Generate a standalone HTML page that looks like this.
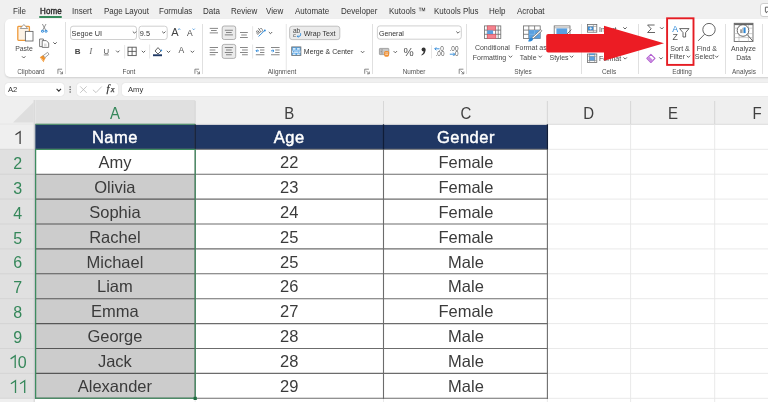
<!DOCTYPE html>
<html><head><meta charset="utf-8">
<style>
*{margin:0;padding:0;box-sizing:border-box}
html,body{width:768px;height:402px;overflow:hidden;background:#f0f0f0;font-family:"Liberation Sans",sans-serif;position:relative}
.a{position:absolute}
.t,.tab,.glab,svg{will-change:transform}
.t{position:absolute;white-space:nowrap;color:#404040}
.tab{position:absolute;top:7.1px;font-size:8px;color:#333;transform:scaleY(1.13);transform-origin:0 7.3px;white-space:nowrap}
#ribbon{position:absolute;left:5px;top:19px;width:775px;height:58px;background:#fff;border-radius:5px;box-shadow:0 1px 2px rgba(0,0,0,.14)}
.sep{position:absolute;top:24px;width:1px;height:50px;background:#e0e0e0}
.glab{position:absolute;top:67.5px;font-size:6.4px;color:#505050;white-space:nowrap;transform:translateX(-50%)}
.rl{position:absolute;font-size:7.3px;color:#404040;white-space:nowrap}
.dl{position:absolute;width:5px;height:5px}
.chev{position:absolute;width:5px;height:3px}
/* grid */
.ch{position:absolute;top:100px;height:24.4px;background:#efefef;color:#404040;font-size:15px;text-align:center;line-height:25px}
.rh{position:absolute;left:0;width:35px;background:#efefef;font-size:15.5px;text-align:center;color:#404040}
.cell{position:absolute;font-size:16px;text-align:center;color:#3d3d3d}
</style></head><body>

<!-- tabs -->
<div class="tab" style="left:12.5px">File</div>
<div class="tab" style="left:39.5px;color:#262626;-webkit-text-stroke:0.35px #262626;letter-spacing:0.1px">Home</div>
<div class="a" style="left:39px;top:16px;width:23px;height:2px;background:#358a5a;border-radius:1px"></div>
<div class="tab" style="left:72px">Insert</div>
<div class="tab" style="left:103.5px">Page Layout</div>
<div class="tab" style="left:159px">Formulas</div>
<div class="tab" style="left:202.5px">Data</div>
<div class="tab" style="left:230.5px">Review</div>
<div class="tab" style="left:266.3px">View</div>
<div class="tab" style="left:294.7px">Automate</div>
<div class="tab" style="left:341.3px">Developer</div>
<div class="tab" style="left:388.6px">Kutools ™</div>
<div class="tab" style="left:434px">Kutools Plus</div>
<div class="tab" style="left:489px">Help</div>
<div class="tab" style="left:516.5px">Acrobat</div>
<div class="a" style="left:760px;top:3.3px;width:20px;height:14px;background:#fff;border:1px solid #cfcfcf;border-radius:3px"></div>
<svg class="a" style="left:760px;top:0" width="8" height="20"><path d="M5.4,7.2 H9 M5.4,7.2 V11.6 H6.2 V12.9 L7.6,11.6 H9" fill="none" stroke="#555" stroke-width="0.9"/></svg>

<div id="ribbon"></div>

<!-- separators -->
<div class="sep" style="left:64.5px;top:22px;height:52px"></div>
<div class="sep" style="left:201.7px"></div>
<div class="sep" style="left:372px"></div>
<div class="sep" style="left:466px"></div>
<div class="sep" style="left:580.5px"></div>
<div class="sep" style="left:638px"></div>
<div class="sep" style="left:725px"></div>
<div class="sep" style="left:762px"></div>

<!-- group labels -->
<div class="glab" style="left:31px">Clipboard</div>
<div class="glab" style="left:128.75px">Font</div>
<div class="glab" style="left:282.4px">Alignment</div>
<div class="glab" style="left:414px">Number</div>
<div class="glab" style="left:522.5px">Styles</div>
<div class="glab" style="left:608.75px">Cells</div>
<div class="glab" style="left:682px">Editing</div>
<div class="glab" style="left:743.6px">Analysis</div>

<svg class="a" style="left:0;top:0" width="768" height="80" viewBox="0 0 768 80" font-family="Liberation Sans, sans-serif">
<defs>
<path id="chev" d="M-1.7,-0.9 L0,0.8 L1.7,-0.9" fill="none" stroke="#505050" stroke-width="0.9"/>
</defs>
<g fill="#484848" font-size="7.0">
<!-- Clipboard -->
<g>
  <rect x="17.8" y="26.4" width="11.6" height="14" rx="0.8" fill="#fdf3e6" stroke="#ef9a3a" stroke-width="1.3"/>
  <path d="M20.2,28.5 L22.6,25.7 Q23.9,23.6 25.2,25.7 L27.6,28.5 Z" fill="#fff" stroke="#858585" stroke-width="0.8" stroke-linejoin="round"/>
  <rect x="25.4" y="31.4" width="7.6" height="9.6" fill="#fff" stroke="#6a6a6a" stroke-width="0.9"/>
  <text x="24" y="50.8" text-anchor="middle" font-size="6.9">Paste</text>
  <use href="#chev" x="23.7" y="57.2"/>
  <!-- scissors -->
  <path d="M42.4,24 L45.6,30 M46,24 L42.8,30" stroke="#707070" stroke-width="0.75" fill="none"/>
  <circle cx="42.5" cy="31.2" r="1.45" fill="#3b8fd9"/>
  <circle cx="46" cy="31.2" r="1.45" fill="#3b8fd9"/>
  <circle cx="42.5" cy="31.2" r="0.5" fill="#fff"/>
  <circle cx="46" cy="31.2" r="0.5" fill="#fff"/>
  <!-- copy -->
  <path d="M39.6,39 H43.4 V46.6 H39.6 Z" fill="#fff" stroke="#666" stroke-width="0.85"/>
  <path d="M42.2,40.6 H46.3 L48.7,43 V47.4 H42.2 Z" fill="#fff" stroke="#666" stroke-width="0.85"/>
  <path d="M44,44.2 H46.6 M44,45.8 H46.6" stroke="#999" stroke-width="0.5"/>
  <use href="#chev" x="55" y="43.2"/>
  <!-- format painter -->
  <path d="M39.8,57.2 L43.4,55 L45.2,58.2 L43.6,62.2 Q41.5,59.6 39.8,57.2 Z" fill="#f0922b"/>
  <path d="M43.2,55.6 L47.6,52.4 L49,54.2 L45,57.6 Z" fill="#fff" stroke="#777" stroke-width="0.7"/>
  <path d="M40.6,58 L43.6,60.8" stroke="#fff" stroke-width="0.5"/>
</g>
<!-- Font group -->
<rect x="70.5" y="26.2" width="66" height="13.3" rx="2.5" fill="#fff" stroke="#c4c4c4" stroke-width="0.8"/>
<text x="71.6" y="35.8" font-size="7.3" fill="#333">Segoe UI</text>
<use href="#chev" x="134.5" y="32.4"/>
<rect x="139" y="26.2" width="28.2" height="13.3" rx="2.5" fill="#fff" stroke="#c4c4c4" stroke-width="0.8"/>
<text x="139.8" y="35.8" font-size="7.3" fill="#333">9.5</text>
<use href="#chev" x="163.8" y="32.4"/>
<text x="171.2" y="36" font-size="11" fill="#444">A</text>
<path d="M178.2,29.8 L179.2,28.6 L180.2,29.8" stroke="#3b8fd9" stroke-width="0.8" fill="none"/>
<text x="187" y="36" font-size="8.5" fill="#444">A</text>
<path d="M192.6,28.6 L193.7,29.8 L194.8,28.6" stroke="#3b8fd9" stroke-width="0.8" fill="none"/>
<text x="74.8" y="53.8" font-size="8" font-weight="bold" fill="#444">B</text>
<text x="89.5" y="53.8" font-size="8" font-style="italic" font-family="Liberation Serif" fill="#555">I</text>
<text x="103.6" y="53.6" font-size="7.8" fill="#555">U</text>
<rect x="103.8" y="54.6" width="5" height="0.7" fill="#555"/>
<use href="#chev" x="117.8" y="51.5"/>
<rect x="124.3" y="45" width="0.8" height="13.5" fill="#e0e0e0"/>
<g stroke="#555" stroke-width="0.9" fill="none"><rect x="128" y="47.2" width="8.2" height="8.4"/><path d="M132.1,47.2 V55.6 M128,51.4 H136.2"/></g>
<use href="#chev" x="143.5" y="51.7"/>
<rect x="149.3" y="44.5" width="0.8" height="14" fill="#e0e0e0"/>
<path d="M155,51 L158,47.6 L161,51 L158,54 Z" fill="#fff" stroke="#555" stroke-width="0.9"/>
<circle cx="161.3" cy="50.4" r="0.9" fill="#3b8fd9"/>
<rect x="153" y="54.3" width="9" height="1.9" fill="#1f3864"/>
<use href="#chev" x="168.5" y="51.7"/>
<text x="178.5" y="53.4" font-size="8.6" fill="#555">A</text>
<use href="#chev" x="192.4" y="51.7"/>
<!-- Alignment -->
<g fill="#6a6a6a">
 <rect x="209.7" y="27.9" width="8.3" height="0.8"/><rect x="211" y="30.2" width="5.7" height="0.8"/><rect x="209.7" y="32.5" width="8.3" height="0.8"/>
 <rect x="222.2" y="26" width="13.5" height="13.5" rx="2" fill="#ebebeb" stroke="#a0a0a0" stroke-width="0.8"/>
 <rect x="224.8" y="29.8" width="8.1" height="0.8"/><rect x="226" y="32.1" width="5.7" height="0.8"/><rect x="224.8" y="34.5" width="8.1" height="0.8"/>
 <rect x="240" y="32.1" width="7.8" height="0.8"/><rect x="241.2" y="34.6" width="5.6" height="0.8"/><rect x="240" y="37" width="7.8" height="0.8"/>
 <rect x="209.7" y="47.2" width="8.3" height="0.8"/><rect x="209.7" y="49.6" width="5.7" height="0.8"/><rect x="209.7" y="52" width="8.3" height="0.8"/><rect x="209.7" y="54.4" width="5.7" height="0.8"/>
 <rect x="222.2" y="44.4" width="13.5" height="14" rx="2" fill="#ebebeb" stroke="#a0a0a0" stroke-width="0.8"/>
 <rect x="224.8" y="47.2" width="8.1" height="0.8"/><rect x="226" y="49.6" width="5.7" height="0.8"/><rect x="224.8" y="52" width="8.1" height="0.8"/><rect x="226" y="54.4" width="5.7" height="0.8"/>
 <rect x="240" y="47.2" width="7.8" height="0.8"/><rect x="242" y="49.6" width="5.8" height="0.8"/><rect x="240" y="52" width="7.8" height="0.8"/><rect x="242" y="54.4" width="5.8" height="0.8"/>
 <rect x="255.8" y="47.2" width="8.6" height="0.8"/><rect x="260" y="49.6" width="4.4" height="0.8"/><rect x="260" y="52" width="4.4" height="0.8"/><rect x="255.8" y="54.4" width="8.6" height="0.8"/>
 <rect x="271" y="47.2" width="8.6" height="0.8"/><rect x="275.2" y="49.6" width="4.4" height="0.8"/><rect x="275.2" y="52" width="4.4" height="0.8"/><rect x="271" y="54.4" width="8.6" height="0.8"/>
</g>
<path d="M256,50.8 H259 M257.3,49.5 L256,50.8 L257.3,52.1" stroke="#2b88d8" stroke-width="0.9" fill="none"/>
<path d="M271,50.8 H274 M272.7,49.5 L274,50.8 L272.7,52.1" stroke="#2b88d8" stroke-width="0.9" fill="none"/>
<rect x="252.3" y="26.2" width="0.8" height="13.5" fill="#e0e0e0"/>
<rect x="252.3" y="44.5" width="0.8" height="14" fill="#e0e0e0"/>
<text x="255.2" y="33.6" font-size="7" fill="#555" transform="rotate(-35 258.6 31)">ab</text>
<path d="M258.5,36.5 L264.6,30.6" stroke="#2b88d8" stroke-width="0.9"/>
<circle cx="264.8" cy="30.4" r="1" fill="#2b88d8"/>
<use href="#chev" x="270.5" y="32.9"/>
<rect x="285.8" y="24" width="0.8" height="50" fill="#e0e0e0"/>
<rect x="289.6" y="26.2" width="50.2" height="13.4" rx="2.5" fill="#ebebeb" stroke="#b4b4b4" stroke-width="0.8"/>
<text x="292.9" y="32.6" font-size="6.6" fill="#444">ab</text>
<text x="292.9" y="36.8" font-size="5.6" fill="#444">c</text>
<path d="M300.6,33.2 V34.8 Q300.6,36.4 298.8,36.4 H297.2 M298.3,35.3 L297.2,36.4 L298.3,37.5" stroke="#2b88d8" stroke-width="0.9" fill="none"/>
<text x="303.8" y="35.8" font-size="7.1" fill="#333">Wrap Text</text>
<rect x="291.7" y="46.9" width="9.2" height="8.6" fill="#5aa7e6" stroke="#707070" stroke-width="0.8"/>
<rect x="292.9" y="48.1" width="2.6" height="1.6" fill="#fff" opacity="0.85"/><rect x="297.1" y="48.1" width="2.6" height="1.6" fill="#fff" opacity="0.85"/>
<rect x="292.3" y="50.6" width="8" height="2.3" fill="#fff"/>
<path d="M293.2,51.75 H299.4 M294.2,50.9 L293.2,51.75 L294.2,52.6 M298.4,50.9 L299.4,51.75 L298.4,52.6" stroke="#2b88d8" stroke-width="0.6" fill="none"/>
<rect x="292.9" y="53.6" width="2.6" height="1.3" fill="#fff" opacity="0.85"/><rect x="297.1" y="53.6" width="2.6" height="1.3" fill="#fff" opacity="0.85"/>
<text x="303.8" y="54.3" fill="#333">Merge &amp; Center</text>
<use href="#chev" x="362.6" y="52"/>
<!-- Number -->
<rect x="377.4" y="25.9" width="83.9" height="13.3" rx="2.5" fill="#fff" stroke="#c4c4c4" stroke-width="0.8"/>
<text x="379" y="35.8" font-size="7" fill="#333">General</text>
<use href="#chev" x="458" y="32.4"/>
<rect x="379.4" y="48.4" width="9.4" height="6.2" rx="0.6" fill="#c8c8c8" stroke="#8a8a8a" stroke-width="0.7"/>
<path d="M380.6,50 H383 M380.6,51.5 H382.4 M380.6,53 H383" stroke="#666" stroke-width="0.5"/>
<rect x="384.1" y="50.9" width="5" height="5.8" rx="1.6" fill="#ef8f33"/>
<path d="M385.2,52.9 H388 M385.2,54.4 H388" stroke="#fff" stroke-width="0.6"/>
<use href="#chev" x="395.3" y="52"/>
<text x="403.6" y="55.8" font-size="11.5" fill="#555">%</text>
<circle cx="423.6" cy="49.6" r="2" fill="#333"/><path d="M425.4,49.8 Q425.8,53.8 421.6,55.6 L421.3,55 Q423.6,53.6 423.8,51" fill="#333"/>
<rect x="431" y="45" width="0.8" height="13.4" fill="#e0e0e0"/>
<text x="438.6" y="51" font-size="6.4" fill="#555">.0</text>
<text x="435.6" y="56.4" font-size="6.4" fill="#555">.00</text>
<path d="M434.8,48.8 H439.5 M436.3,47.3 L434.8,48.8 L436.3,50.3" stroke="#2b88d8" stroke-width="0.9" fill="none"/>
<text x="449.6" y="51" font-size="6.4" fill="#555">.00</text>
<text x="453.2" y="56.4" font-size="6.4" fill="#555">.0</text>
<path d="M449.8,54.2 H454.7 M453.2,52.7 L454.7,54.2 L453.2,55.7" stroke="#2b88d8" stroke-width="0.9" fill="none"/>
<!-- dialog launchers -->
<g stroke="#666" stroke-width="0.75" fill="none">
<path d="M57.9,73.8 V69.2 H62.1 M59.4,70.7 L62.4,73.7 M62.5,71.5 V73.8 H60.2"/>
<path d="M194.9,73.8 V69.2 H199.1 M196.4,70.7 L199.4,73.7 M199.5,71.5 V73.8 H197.2"/>
<path d="M364.7,73.8 V69.2 H368.9 M366.2,70.7 L369.2,73.7 M369.3,71.5 V73.8 H367.0"/>
<path d="M459.2,73.8 V69.2 H463.4 M460.7,70.7 L463.7,73.7 M463.8,71.5 V73.8 H461.5"/>
</g>
<!-- Styles -->
<g stroke="#6a6a6a" stroke-width="0.8" fill="none">
 <rect x="484.4" y="25.9" width="16.4" height="12.6" fill="#fff"/>
 <path d="M484.4,30.1 H500.8 M484.4,34.3 H500.8 M487.3,25.9 V38.5 M495.6,25.9 V38.5 M498.2,25.9 V38.5"/>
</g>
<rect x="487.3" y="25.9" width="8.3" height="4.2" fill="#f4838f" stroke="#d84a58" stroke-width="0.5"/>
<rect x="487.3" y="30.4" width="5.8" height="3.7" fill="#5aa0e0"/>
<rect x="487.3" y="34.3" width="8.6" height="4.2" fill="#f4838f" stroke="#d84a58" stroke-width="0.5"/>
<text x="492.4" y="50.4" text-anchor="middle">Conditional</text>
<text x="489.5" y="59.7" text-anchor="middle">Formatting</text>
<use href="#chev" x="510.5" y="56.6"/>
<g stroke="#6a6a6a" stroke-width="0.8" fill="none">
 <rect x="523.4" y="25.9" width="16.8" height="12.6" fill="#fff"/>
 <path d="M523.4,30.1 H540.2 M523.4,34.3 H540.2 M528.8,25.9 V38.5 M534.6,25.9 V38.5"/>
</g>
<rect x="528.8" y="30.1" width="11.4" height="8.4" fill="#5aa0e0"/>
<path d="M528.8,34.3 H540.2 M534.6,30.1 V38.5" stroke="#8cc0ee" stroke-width="0.6"/>
<path d="M540.8,29.6 L542,30.8 L533,39 L531.8,37.8 Z" fill="#fff" stroke="#666" stroke-width="0.7"/>
<path d="M531.6,37.4 Q528.8,38 528.2,41.6 Q532.4,41.6 533.2,39 Z" fill="#2b88d8"/>
<text x="531" y="50.4" text-anchor="middle">Format as</text>
<text x="528.2" y="59.7" text-anchor="middle">Table</text>
<use href="#chev" x="540.2" y="56.6"/>
<rect x="554.2" y="25.9" width="15.8" height="12" fill="#fff" stroke="#6a6a6a" stroke-width="0.8"/>
<path d="M554.2,27.8 H570" stroke="#8a8a8a" stroke-width="0.6"/>
<rect x="556.4" y="28.4" width="10.8" height="9" fill="#5aa0e0"/>
<path d="M571.4,29.6 L566.6,34.4" stroke="#666" stroke-width="0.9"/>
<text x="559" y="59.7" text-anchor="middle">Styles</text>
<use href="#chev" x="571.6" y="56.6"/>
<!-- Cells -->
<rect x="587.4" y="24.4" width="9.4" height="7.8" fill="#fff" stroke="#6a6a6a" stroke-width="0.8"/>
<rect x="588" y="26.4" width="5.4" height="4" fill="#3b8fd9"/>
<path d="M587.4,26.4 H596.8 M587.4,30.4 H596.8 M593.4,24.4 V32.2" stroke="#8a8a8a" stroke-width="0.6"/>
<path d="M589.4,28.4 H592 M590.7,27.1 V29.7" stroke="#fff" stroke-width="0.7"/>
<text x="599" y="31.5">Insert</text>
<use href="#chev" x="625" y="28.2"/>
<rect x="587.4" y="54" width="9.4" height="8.4" fill="#fff" stroke="#6a6a6a" stroke-width="0.8"/>
<rect x="589" y="53.6" width="6.2" height="1.2" fill="#3b8fd9"/>
<rect x="589" y="56.2" width="6.2" height="4.6" fill="#5aa0e0"/>
<path d="M587.4,56.2 H596.8 M587.4,60.6 H596.8 M589.6,54 V62.4 M594.6,54 V62.4" stroke="#8a8a8a" stroke-width="0.6"/>
<text x="599" y="61.4">Format</text>
<use href="#chev" x="625.2" y="58.3"/>
<!-- Editing -->
<path d="M647.6,25 H654.6 M647.6,25 L651.2,28.8 L647.6,32.5 H655" fill="none" stroke="#555" stroke-width="0.9"/>
<use href="#chev" x="661.8" y="28.2"/>
<path d="M646.8,58.4 L650.9,54.3 L655,58.4 L650.9,62.5 Z" fill="#fff" stroke="#b25fd0" stroke-width="1.1" stroke-linejoin="round"/>
<path d="M647.4,58.4 L649.3,56.5 L653.1,60.3 L650.9,62 Z" fill="#c98be0"/>
<use href="#chev" x="661" y="58.3"/>
<text x="672.2" y="31.5" font-size="8.8" fill="#2b88d8">A</text>

<text x="672.4" y="40.4" font-size="8.8" fill="#555">Z</text>
<path d="M679.6,28.6 H689 L685.6,32.6 V37 H683 V32.6 Z" fill="#fff" stroke="#555" stroke-width="0.9" stroke-linejoin="round"/>
<text x="680" y="50.6" text-anchor="middle">Sort &amp;</text>
<text x="677.2" y="59.2" text-anchor="middle">Filter</text>
<use href="#chev" x="688.4" y="56.6"/>
<circle cx="709" cy="29.6" r="6.2" fill="#fff" stroke="#555" stroke-width="0.9"/>
<path d="M704.6,34.2 L698.2,40.8" stroke="#555" stroke-width="0.9"/>
<text x="706.8" y="50.6" text-anchor="middle">Find &amp;</text>
<text x="704.6" y="59.2" text-anchor="middle">Select</text>
<use href="#chev" x="716.7" y="56.6"/>
<!-- Analyze -->
<rect x="734.2" y="23.3" width="18.8" height="18.2" fill="#fff" stroke="#6a6a6a" stroke-width="0.9"/>
<rect x="734.2" y="23.3" width="18.8" height="1.8" fill="#6a6a6a"/>
<g stroke="#b0b0b0" stroke-width="0.6"><path d="M734.2,28.2 H753 M734.2,33.6 H753 M734.2,37.6 H753 M739,25 V41.5 M748.4,25 V41.5"/></g>
<circle cx="743" cy="30.5" r="5.8" fill="#fff" stroke="#555" stroke-width="0.9"/>
<rect x="740.3" y="29.3" width="1.5" height="3.8" fill="#888"/>
<rect x="742" y="27.8" width="1.6" height="5.3" fill="#c4c4c4"/>
<rect x="743.6" y="27.4" width="2" height="5.7" fill="#2b88d8"/>
<path d="M747.2,34.6 L752.8,41" stroke="#555" stroke-width="0.9"/>
<text x="743.4" y="50.6" text-anchor="middle">Analyze</text>
<text x="743.6" y="59.7" text-anchor="middle">Data</text>
<!-- red arrow -->
<path d="M548.2,33.9 H604 V25.7 L664,43.3 L604,60.7 V52.6 H548.2 Q546.2,52.6 546.2,50.6 V35.9 Q546.2,33.9 548.2,33.9 Z" fill="#ec1c24"/>
<!-- red box -->
<rect x="667.1" y="18.3" width="26.4" height="46.6" fill="none" stroke="#e51c23" stroke-width="1.9"/>
</g>
</svg>


<!-- formula bar -->
<div class="a" style="left:5px;top:83px;width:58.5px;height:13px;background:#fff;border-radius:3px;box-shadow:0 0 1px rgba(0,0,0,.2)"></div>
<div class="a" style="left:76.8px;top:83px;width:41.4px;height:12.8px;background:#fff;border-radius:3px;box-shadow:0 0 1px rgba(0,0,0,.2)"></div>
<div class="a" style="left:122.4px;top:83px;width:660px;height:13px;background:#fff;border-radius:3px;box-shadow:0 0 1px rgba(0,0,0,.2)"></div>
<svg class="a" style="left:0;top:78px" width="160" height="22" viewBox="0 78 160 22" font-family="Liberation Sans, sans-serif">
<text x="8" y="91.8" font-size="7.6" fill="#333">A2</text>
<path d="M56.6,88.9 L58.8,91.1 L61,88.9" fill="none" stroke="#333" stroke-width="1.1"/>
<circle cx="70.1" cy="86.9" r="0.75" fill="#555"/><circle cx="70.1" cy="89.5" r="0.75" fill="#555"/><circle cx="70.1" cy="92.1" r="0.75" fill="#555"/>
<path d="M80.2,86.4 L86.6,92.8 M86.6,86.4 L80.2,92.8" stroke="#b8b8b8" stroke-width="0.8"/>
<path d="M92.9,89.8 L96,92.6 L101.8,86.5" fill="none" stroke="#b8b8b8" stroke-width="0.8"/>
<text x="106.6" y="92.2" font-size="10.5" font-style="italic" font-family="Liberation Serif, serif" fill="#333" stroke="#333" stroke-width="0.25">f</text>
<text x="110.8" y="92" font-size="8.4" font-style="italic" font-family="Liberation Serif, serif" fill="#333" stroke="#333" stroke-width="0.25">x</text>
<text x="128" y="91.8" font-size="7.6" fill="#333">Amy</text>
</svg>
<svg class="a" style="left:0;top:0" width="768" height="402" viewBox="0 0 768 402"><rect x="0.00" y="100.00" width="768.00" height="302.00" fill="#fff" /><rect x="0.00" y="100.00" width="768.00" height="24.40" fill="#efefef" /><rect x="35.40" y="100.00" width="159.80" height="24.40" fill="#e0e0e0" /><polygon points="33.5,102.2 33.5,122.6 13,122.6" fill="#dedede"/><path d="M195.20,101.00V124.40" stroke="#d4d4d4" stroke-width="0.9"/><path d="M383.50,101.00V124.40" stroke="#d4d4d4" stroke-width="0.9"/><path d="M547.40,101.00V124.40" stroke="#d4d4d4" stroke-width="0.9"/><path d="M630.60,101.00V124.40" stroke="#d4d4d4" stroke-width="0.9"/><path d="M714.70,101.00V124.40" stroke="#d4d4d4" stroke-width="0.9"/><path d="M799.00,101.00V124.40" stroke="#d4d4d4" stroke-width="0.9"/><path d="M0.00,124.30H768.00" stroke="#d8d8d8" stroke-width="0.9"/><rect x="0.00" y="124.40" width="34.80" height="24.90" fill="#efefef" /><rect x="0.00" y="149.30" width="34.80" height="249.00" fill="#e0e0e0" /><rect x="0.00" y="398.30" width="34.80" height="302.00" fill="#efefef" /><path d="M0.00,149.30H34.80" stroke="#d2d2d2" stroke-width="0.9"/><path d="M0.00,174.20H34.80" stroke="#d2d2d2" stroke-width="0.9"/><path d="M0.00,199.10H34.80" stroke="#d2d2d2" stroke-width="0.9"/><path d="M0.00,224.00H34.80" stroke="#d2d2d2" stroke-width="0.9"/><path d="M0.00,248.90H34.80" stroke="#d2d2d2" stroke-width="0.9"/><path d="M0.00,273.80H34.80" stroke="#d2d2d2" stroke-width="0.9"/><path d="M0.00,298.70H34.80" stroke="#d2d2d2" stroke-width="0.9"/><path d="M0.00,323.60H34.80" stroke="#d2d2d2" stroke-width="0.9"/><path d="M0.00,348.50H34.80" stroke="#d2d2d2" stroke-width="0.9"/><path d="M0.00,373.40H34.80" stroke="#d2d2d2" stroke-width="0.9"/><path d="M0.00,398.30H34.80" stroke="#d2d2d2" stroke-width="0.9"/><path d="M0.00,423.20H34.80" stroke="#d2d2d2" stroke-width="0.9"/><path d="M34.20,100.00V402.00" stroke="#cfcfcf" stroke-width="0.9"/><path d="M547.40,149.30H768.00" stroke="#e6e6e6" stroke-width="0.9"/><path d="M547.40,174.20H768.00" stroke="#e6e6e6" stroke-width="0.9"/><path d="M547.40,199.10H768.00" stroke="#e6e6e6" stroke-width="0.9"/><path d="M547.40,224.00H768.00" stroke="#e6e6e6" stroke-width="0.9"/><path d="M547.40,248.90H768.00" stroke="#e6e6e6" stroke-width="0.9"/><path d="M547.40,273.80H768.00" stroke="#e6e6e6" stroke-width="0.9"/><path d="M547.40,298.70H768.00" stroke="#e6e6e6" stroke-width="0.9"/><path d="M547.40,323.60H768.00" stroke="#e6e6e6" stroke-width="0.9"/><path d="M547.40,348.50H768.00" stroke="#e6e6e6" stroke-width="0.9"/><path d="M547.40,373.40H768.00" stroke="#e6e6e6" stroke-width="0.9"/><path d="M547.40,398.30H768.00" stroke="#e6e6e6" stroke-width="0.9"/><path d="M547.40,423.20H768.00" stroke="#e6e6e6" stroke-width="0.9"/><path d="M35.40,423.20H768.00" stroke="#e6e6e6" stroke-width="0.9"/><path d="M35.40,448.10H768.00" stroke="#e6e6e6" stroke-width="0.9"/><path d="M630.60,124.40V402.00" stroke="#e6e6e6" stroke-width="0.9"/><path d="M714.70,124.40V402.00" stroke="#e6e6e6" stroke-width="0.9"/><path d="M799.00,124.40V402.00" stroke="#e6e6e6" stroke-width="0.9"/><path d="M195.20,398.30V402.00" stroke="#e6e6e6" stroke-width="0.9"/><path d="M383.50,398.30V402.00" stroke="#e6e6e6" stroke-width="0.9"/><path d="M547.40,398.30V402.00" stroke="#e6e6e6" stroke-width="0.9"/><rect x="35.40" y="124.90" width="512.00" height="24.40" fill="#203764" /><path d="M35.40,149.30H548.00" stroke="#6c6c6c" stroke-width="1.1"/><path d="M35.40,174.20H548.00" stroke="#6c6c6c" stroke-width="1.1"/><path d="M35.40,199.10H548.00" stroke="#6c6c6c" stroke-width="1.1"/><path d="M35.40,224.00H548.00" stroke="#6c6c6c" stroke-width="1.1"/><path d="M35.40,248.90H548.00" stroke="#6c6c6c" stroke-width="1.1"/><path d="M35.40,273.80H548.00" stroke="#6c6c6c" stroke-width="1.1"/><path d="M35.40,298.70H548.00" stroke="#6c6c6c" stroke-width="1.1"/><path d="M35.40,323.60H548.00" stroke="#6c6c6c" stroke-width="1.1"/><path d="M35.40,348.50H548.00" stroke="#6c6c6c" stroke-width="1.1"/><path d="M35.40,373.40H548.00" stroke="#6c6c6c" stroke-width="1.1"/><path d="M35.40,398.30H548.00" stroke="#6c6c6c" stroke-width="1.1"/><path d="M35.40,124.40V398.90" stroke="#5a6d8a" stroke-width="1.1"/><path d="M195.20,124.40V398.90" stroke="#6c6c6c" stroke-width="1.1"/><path d="M383.50,124.40V398.90" stroke="#6c6c6c" stroke-width="1.1"/><path d="M547.40,124.40V398.90" stroke="#6c6c6c" stroke-width="1.1"/><path d="M195.20,124.40V149.30" stroke="#0f1c38" stroke-width="1.3"/><path d="M383.50,124.40V149.30" stroke="#0f1c38" stroke-width="1.3"/><path d="M547.40,124.40V149.30" stroke="#0f1c38" stroke-width="1.3"/><rect x="35.40" y="174.20" width="159.80" height="224.10" fill="rgba(0,0,0,0.2)" /><path d="M35.40,124.20H195.20" stroke="#2c7a4e" stroke-width="1.1"/><path d="M35.60,149.30V398.30" stroke="#3f8c5f" stroke-width="0.9"/><rect x="35.60" y="149.40" width="159.60" height="248.80" fill="none" stroke="#3f8c5f" stroke-width="1.15"/><rect x="193.60" y="396.80" width="3.20" height="3.20" fill="#1f6e42" /></svg>
<div class="t" style="left:35.4px;top:105px;width:159.79999999999998px;text-align:center;font-size:15px;color:#35875a;transform:scaleY(1.16);transform-origin:50% 13.7px">A</div>
<div class="t" style="left:195.2px;top:105px;width:188.3px;text-align:center;font-size:15px;color:#404040;transform:scaleY(1.16);transform-origin:50% 13.7px">B</div>
<div class="t" style="left:383.5px;top:105px;width:163.89999999999998px;text-align:center;font-size:15px;color:#404040;transform:scaleY(1.16);transform-origin:50% 13.7px">C</div>
<div class="t" style="left:547.4px;top:105px;width:83.20000000000005px;text-align:center;font-size:15px;color:#404040;transform:scaleY(1.16);transform-origin:50% 13.7px">D</div>
<div class="t" style="left:630.6px;top:105px;width:84.10000000000002px;text-align:center;font-size:15px;color:#404040;transform:scaleY(1.16);transform-origin:50% 13.7px">E</div>
<div class="t" style="left:714.7px;top:105px;width:84.29999999999995px;text-align:center;font-size:15px;color:#404040;transform:scaleY(1.16);transform-origin:50% 13.7px">F</div>
<svg class="a" style="left:0;top:0" width="36" height="402" viewBox="0 0 36 402" font-family="Liberation Sans, sans-serif"><path d="M15.50,134.80 L20.10,131.70 V143.90" fill="none" stroke="#404040" stroke-width="1.3"/><text x="17.70" y="0" text-anchor="middle" font-size="16" fill="#35875a" transform="translate(0 168.80) scale(1 1.08)">2</text><text x="17.70" y="0" text-anchor="middle" font-size="16" fill="#35875a" transform="translate(0 193.70) scale(1 1.08)">3</text><text x="17.70" y="0" text-anchor="middle" font-size="16" fill="#35875a" transform="translate(0 218.60) scale(1 1.08)">4</text><text x="17.70" y="0" text-anchor="middle" font-size="16" fill="#35875a" transform="translate(0 243.50) scale(1 1.08)">5</text><text x="17.70" y="0" text-anchor="middle" font-size="16" fill="#35875a" transform="translate(0 268.40) scale(1 1.08)">6</text><text x="17.70" y="0" text-anchor="middle" font-size="16" fill="#35875a" transform="translate(0 293.30) scale(1 1.08)">7</text><text x="17.70" y="0" text-anchor="middle" font-size="16" fill="#35875a" transform="translate(0 318.20) scale(1 1.08)">8</text><text x="17.70" y="0" text-anchor="middle" font-size="16" fill="#35875a" transform="translate(0 343.10) scale(1 1.08)">9</text><path d="M10.60,358.90 L15.20,355.80 V368.00" fill="none" stroke="#35875a" stroke-width="1.3"/><text x="22.30" y="0" text-anchor="middle" font-size="16" fill="#35875a" transform="translate(0 368.00) scale(1 1.08)">0</text><path d="M10.90,383.80 L15.50,380.70 V392.90" fill="none" stroke="#35875a" stroke-width="1.3"/><path d="M20.10,383.80 L24.70,380.70 V392.90" fill="none" stroke="#35875a" stroke-width="1.3"/><path d="M10.60,408.70 L15.20,405.60 V417.80" fill="none" stroke="#404040" stroke-width="1.3"/><text x="22.30" y="0" text-anchor="middle" font-size="16" fill="#404040" transform="translate(0 417.80) scale(1 1.08)">2</text></svg>
<div class="t" style="left:35.4px;top:128.20px;width:159.79999999999998px;text-align:center;font-size:16.5px;color:#fff;-webkit-text-stroke:0.45px #fff;letter-spacing:0.5px">Name</div>
<div class="t" style="left:195.2px;top:128.20px;width:188.3px;text-align:center;font-size:16.5px;color:#fff;-webkit-text-stroke:0.45px #fff;letter-spacing:0.5px">Age</div>
<div class="t" style="left:383.5px;top:128.20px;width:163.89999999999998px;text-align:center;font-size:16.5px;color:#fff;-webkit-text-stroke:0.45px #fff;letter-spacing:0.5px">Gender</div>
<div class="t" style="left:35.4px;top:152.90px;width:159.79999999999998px;text-align:center;font-size:16.5px;color:#3b3b3b">Amy</div>
<div class="t" style="left:195.2px;top:152.90px;width:188.3px;text-align:center;font-size:16.5px;color:#3b3b3b">22</div>
<div class="t" style="left:383.5px;top:152.90px;width:163.89999999999998px;text-align:center;font-size:16.5px;color:#3b3b3b">Female</div>
<div class="t" style="left:35.4px;top:177.80px;width:159.79999999999998px;text-align:center;font-size:16.5px;color:#3b3b3b">Olivia</div>
<div class="t" style="left:195.2px;top:177.80px;width:188.3px;text-align:center;font-size:16.5px;color:#3b3b3b">23</div>
<div class="t" style="left:383.5px;top:177.80px;width:163.89999999999998px;text-align:center;font-size:16.5px;color:#3b3b3b">Female</div>
<div class="t" style="left:35.4px;top:202.70px;width:159.79999999999998px;text-align:center;font-size:16.5px;color:#3b3b3b">Sophia</div>
<div class="t" style="left:195.2px;top:202.70px;width:188.3px;text-align:center;font-size:16.5px;color:#3b3b3b">24</div>
<div class="t" style="left:383.5px;top:202.70px;width:163.89999999999998px;text-align:center;font-size:16.5px;color:#3b3b3b">Female</div>
<div class="t" style="left:35.4px;top:227.60px;width:159.79999999999998px;text-align:center;font-size:16.5px;color:#3b3b3b">Rachel</div>
<div class="t" style="left:195.2px;top:227.60px;width:188.3px;text-align:center;font-size:16.5px;color:#3b3b3b">25</div>
<div class="t" style="left:383.5px;top:227.60px;width:163.89999999999998px;text-align:center;font-size:16.5px;color:#3b3b3b">Female</div>
<div class="t" style="left:35.4px;top:252.50px;width:159.79999999999998px;text-align:center;font-size:16.5px;color:#3b3b3b">Michael</div>
<div class="t" style="left:195.2px;top:252.50px;width:188.3px;text-align:center;font-size:16.5px;color:#3b3b3b">25</div>
<div class="t" style="left:383.5px;top:252.50px;width:163.89999999999998px;text-align:center;font-size:16.5px;color:#3b3b3b">Male</div>
<div class="t" style="left:35.4px;top:277.40px;width:159.79999999999998px;text-align:center;font-size:16.5px;color:#3b3b3b">Liam</div>
<div class="t" style="left:195.2px;top:277.40px;width:188.3px;text-align:center;font-size:16.5px;color:#3b3b3b">26</div>
<div class="t" style="left:383.5px;top:277.40px;width:163.89999999999998px;text-align:center;font-size:16.5px;color:#3b3b3b">Male</div>
<div class="t" style="left:35.4px;top:302.30px;width:159.79999999999998px;text-align:center;font-size:16.5px;color:#3b3b3b">Emma</div>
<div class="t" style="left:195.2px;top:302.30px;width:188.3px;text-align:center;font-size:16.5px;color:#3b3b3b">27</div>
<div class="t" style="left:383.5px;top:302.30px;width:163.89999999999998px;text-align:center;font-size:16.5px;color:#3b3b3b">Female</div>
<div class="t" style="left:35.4px;top:327.20px;width:159.79999999999998px;text-align:center;font-size:16.5px;color:#3b3b3b">George</div>
<div class="t" style="left:195.2px;top:327.20px;width:188.3px;text-align:center;font-size:16.5px;color:#3b3b3b">28</div>
<div class="t" style="left:383.5px;top:327.20px;width:163.89999999999998px;text-align:center;font-size:16.5px;color:#3b3b3b">Male</div>
<div class="t" style="left:35.4px;top:352.10px;width:159.79999999999998px;text-align:center;font-size:16.5px;color:#3b3b3b">Jack</div>
<div class="t" style="left:195.2px;top:352.10px;width:188.3px;text-align:center;font-size:16.5px;color:#3b3b3b">28</div>
<div class="t" style="left:383.5px;top:352.10px;width:163.89999999999998px;text-align:center;font-size:16.5px;color:#3b3b3b">Male</div>
<div class="t" style="left:35.4px;top:377.00px;width:159.79999999999998px;text-align:center;font-size:16.5px;color:#3b3b3b">Alexander</div>
<div class="t" style="left:195.2px;top:377.00px;width:188.3px;text-align:center;font-size:16.5px;color:#3b3b3b">29</div>
<div class="t" style="left:383.5px;top:377.00px;width:163.89999999999998px;text-align:center;font-size:16.5px;color:#3b3b3b">Male</div>

</body></html>
